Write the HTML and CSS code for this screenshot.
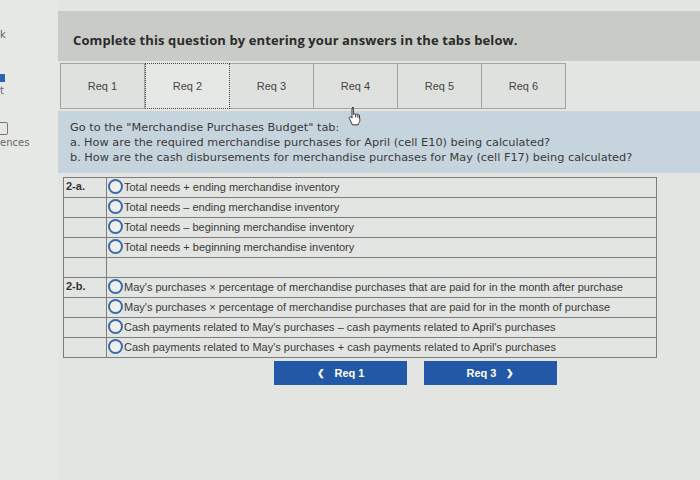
FILE: index.html
```html
<!DOCTYPE html>
<html>
<head>
<meta charset="utf-8">
<link rel="stylesheet" href="styles.css">
</head>
<body>
<div class="page">
  <aside class="side">
    <div class="s-text s-k">k</div>
    <div class="s-blue"></div>
    <div class="s-text s-t">t</div>
    <div class="s-icon"></div>
    <div class="s-text s-ences">ences</div>
  </aside>
  <main class="main">
    <header class="head">
      <h1 class="title">Complete this question by entering your answers in the tabs below.</h1>
    </header>
    <nav class="tabs">
      <div class="tab">Req 1</div>
      <div class="tab tab-active">Req 2</div>
      <div class="tab">Req 3</div>
      <div class="tab">Req 4</div>
      <div class="tab">Req 5</div>
      <div class="tab">Req 6</div>
      <svg class="cursor" width="16" height="20" viewBox="0 0 16 20">
        <path d="M5 1.5c.8 0 1.4.6 1.4 1.4v5.6l.2-.1c.3-.6 1.5-.7 1.9 0 .4-.5 1.6-.5 1.9.2.5-.4 1.6-.2 1.8.6l.6 4.2c.2 1.5-.3 2.9-1.2 3.9l-.4 1.5H5.4L2.6 13c-.6-.7-.5-1.6.1-2 .6-.4 1.3-.2 1.7.3l.6.8V2.9c0-.8.6-1.4 1.4-1.4z" fill="#fff" stroke="#222" stroke-width="0.9" stroke-linejoin="round"/>
        <path d="M8.5 8.4v3M10.4 8.6v3M12.2 9.2v2.5" stroke="#222" stroke-width="0.8" fill="none"/>
      </svg>
    </nav>
    <section class="question">
      <p>Go to the "Merchandise Purchases Budget" tab:</p>
      <p>a. How are the required merchandise purchases for April (cell E10) being calculated?</p>
      <p>b. How are the cash disbursements for merchandise purchases for May (cell F17) being calculated?</p>
    </section>
    <table class="answers">
      <tr><td class="lbl">2-a.</td><td><span class="radio"></span>Total needs + ending merchandise inventory</td></tr>
      <tr><td class="lbl"></td><td><span class="radio"></span>Total needs – ending merchandise inventory</td></tr>
      <tr><td class="lbl"></td><td><span class="radio"></span>Total needs – beginning merchandise inventory</td></tr>
      <tr><td class="lbl"></td><td><span class="radio"></span>Total needs + beginning merchandise inventory</td></tr>
      <tr class="blank"><td class="lbl"></td><td></td></tr>
      <tr><td class="lbl">2-b.</td><td><span class="radio"></span>May's purchases × percentage of merchandise purchases that are paid for in the month after purchase</td></tr>
      <tr><td class="lbl"></td><td><span class="radio"></span>May's purchases × percentage of merchandise purchases that are paid for in the month of purchase</td></tr>
      <tr><td class="lbl"></td><td><span class="radio"></span>Cash payments related to May's purchases – cash payments related to April's purchases</td></tr>
      <tr><td class="lbl"></td><td><span class="radio"></span>Cash payments related to May's purchases + cash payments related to April's purchases</td></tr>
    </table>
    <div class="buttons">
      <button class="btn"><span class="chev">&#10094;</span>Req 1</button>
      <button class="btn">Req 3<span class="chev chev-r">&#10095;</span></button>
    </div>
  </main>
</div>
</body>
</html>
```

FILE: styles.css
```css
html, body {
  margin: 0;
  padding: 0;
}
body {
  width: 700px;
  height: 480px;
  overflow: hidden;
  background: #e4e6e3;
  font-family: "Liberation Sans", Arial, sans-serif;
  color: #333;
}
.page {
  display: grid;
  grid-template-columns: 58px 1fr;
  height: 480px;
}
.side {
  display: flex;
  flex-direction: column;
  background: #e6e8e5;
  font-family: "DejaVu Sans", sans-serif;
  font-size: 10px;
  color: #666;
}
.s-text {
  line-height: 12px;
}
.s-k { margin-top: 29px; }
.s-blue {
  margin-top: 33px;
  width: 5px;
  height: 8px;
  background: #2a63b8;
}
.s-t { margin-top: 3px; }
.s-icon {
  margin-top: 25px;
  width: 7px;
  height: 11px;
  border: 1px solid #777;
  border-left: none;
  border-radius: 0 2px 2px 0;
}
.s-ences { margin-top: 2px; }

.main {
  display: flex;
  flex-direction: column;
  background: #e3e5e2;
}
.head {
  margin-top: 11px;
  height: 50px;
  background: #c9cbc7;
  padding: 20px 0 0 15px;
  box-sizing: border-box;
}
.title {
  margin: 0;
  font-family: "Open Sans", sans-serif;
  font-weight: 700;
  font-size: 13px;
  line-height: 18px;
  color: #2b2b2b;
  letter-spacing: 0.1px;
}
.tabs {
  position: relative;
  display: flex;
  margin-top: 2px;
  margin-left: 2px;
  height: 45px;
}
.tab {
  width: 83px;
  height: 44px;
  border: 1px solid #a3a5a2;
  border-left: none;
  background: #dfe1de;
  display: flex;
  align-items: center;
  justify-content: center;
  font-size: 11px;
  color: #444;
}
.tab:first-child {
  border-left: 1px solid #a3a5a2;
}
.tab-active {
  border: 1px dotted #444;
  background: #e6e8e5;
}
.cursor {
  position: absolute;
  left: 287px;
  top: 43px;
}
.question {
  margin-top: 3px;
  background: #c6d4dd;
  padding: 9px 12px 8px 12px;
  font-family: "DejaVu Sans", sans-serif;
  font-size: 11.3px;
  color: #3a3a3a;
}
.question p {
  margin: 0;
  line-height: 15px;
}
.answers {
  margin: 4px 0 0 5px;
  width: 594px;
  border-collapse: collapse;
  font-size: 11px;
  color: #3a3a3a;
}
.answers td {
  border: 1px solid #7b7d7a;
  height: 19px;
  padding: 0;
  vertical-align: middle;
}
.answers .lbl {
  width: 40px;
  padding-left: 2px;
  font-weight: 700;
  color: #333;
  vertical-align: top;
  padding-top: 2px;
  height: 17px;
}
.radio {
  display: inline-block;
  width: 11px;
  height: 11px;
  border: 2px solid #3c6aa8;
  border-radius: 50%;
  vertical-align: middle;
  margin: -2px 1px 0 1px;
  background: #eef0ee;
}
.buttons {
  display: flex;
  gap: 17px;
  margin: 3px 0 0 216px;
}
.btn {
  width: 133px;
  height: 24px;
  border: none;
  background: #2358a6;
  color: #fff;
  font-family: "Liberation Sans", Arial, sans-serif;
  font-weight: 700;
  font-size: 11px;
  display: flex;
  align-items: center;
  justify-content: center;
  padding: 0;
}
.chev {
  font-size: 9px;
  margin-right: 10px;
}
.chev-r {
  margin-right: 0;
  margin-left: 10px;
}
```
